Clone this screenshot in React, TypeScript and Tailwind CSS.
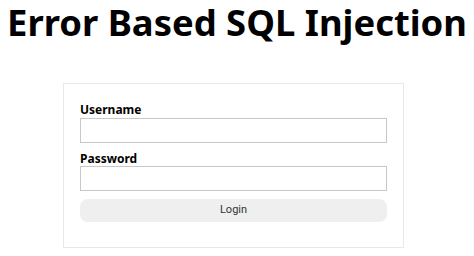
export default function App() {
  return (
    <div className="w-[474px] h-[256px] bg-white overflow-hidden font-['Noto_Sans',sans-serif]">
      <h1 className="text-center text-[36.4px] font-bold leading-[44px] text-black whitespace-nowrap">
        Error Based SQL Injection
      </h1>
      <div className="ml-[63px] mt-[39px] w-[341px] h-[165px] border border-[#e8e8e8] px-[16px] pt-[18px]">
        <label className="block text-[12px] font-bold leading-[15px] text-black">Username</label>
        <input className="block w-full h-[25px] border border-[#c8c8c8] mt-[1px]" />
        <label className="block text-[12px] font-bold leading-[15px] text-black mt-[8px]">Password</label>
        <input className="block w-full h-[25px] border border-[#c8c8c8]" type="password" />
        <button className="block w-full h-[23px] mt-[8px] rounded-[8px] bg-[#efefef] text-[11px] text-[#333] font-['Roboto',sans-serif]">
          Login
        </button>
      </div>
    </div>
  );
}
